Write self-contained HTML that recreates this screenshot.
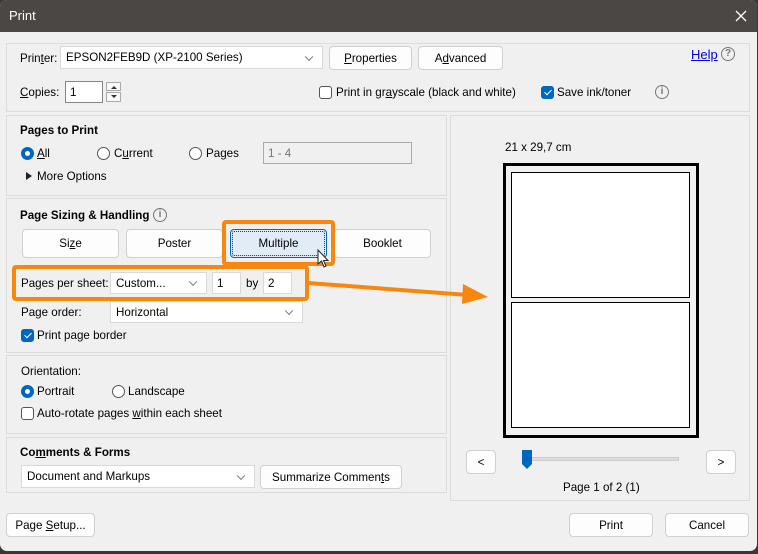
<!DOCTYPE html>
<html><head><meta charset="utf-8"><style>
*{box-sizing:border-box;margin:0;padding:0}
body{width:758px;height:554px;overflow:hidden;background:#3a3836;font-family:"Liberation Sans",sans-serif;font-size:11.6px;color:#000;position:relative}
.a{position:absolute}
.win{position:absolute;left:0;top:0;width:757px;height:551px;background:#f0f0f0;border-radius:7px;overflow:hidden}
.title{position:absolute;left:0;top:0;width:757px;height:32px;background:#4a4745;color:#fff;font-size:13px}
.grp{position:absolute;border:1px solid #dcdcdc}
.btn{position:absolute;background:#fdfdfd;border:1px solid #d0d0d0;border-radius:4px;text-align:center;display:flex;align-items:center;justify-content:center}
.inp{position:absolute;background:#fff;border:1px solid #d9d9d9;padding-left:4px;display:flex;align-items:center}
.cb{position:absolute;background:#fff;border:1px solid #d9d9d9;padding-left:5px;display:flex;align-items:center}
.cb:after{content:"";position:absolute;right:10px;top:50%;width:5px;height:5px;border-right:1px solid #777;border-bottom:1px solid #777;transform:translateY(-70%) rotate(45deg)}
.t{position:absolute;white-space:nowrap;line-height:14px}
.b{font-weight:bold}
.rad{position:absolute;width:13px;height:13px;border:1px solid #555;border-radius:50%;background:#fff}
.rad.on{background:#fff;border:4px solid #0067c0}
.chk{position:absolute;width:13px;height:13px;border:1px solid #555;border-radius:3px;background:#fff}
.chk.on{background:#0067c0;border-color:#0067c0}
.chk.on:after{content:"";position:absolute;left:3.5px;top:1px;width:3px;height:6px;border-right:1.3px solid #fff;border-bottom:1.3px solid #fff;transform:rotate(45deg)}
.info{position:absolute;width:14px;height:14px;border:1.3px solid #777;border-radius:50%;color:#777;font-size:10px;font-weight:bold;text-align:center;line-height:12px}
u{text-decoration:underline}
</style></head><body>
<div class="win">
<div class="title"><span class="t" style="left:9px;top:9px">Print</span>
<svg class="a" style="left:735px;top:10px" width="12" height="12"><path d="M1 1L11 11M11 1L1 11" stroke="#fff" stroke-width="1.3"/></svg></div>

<div class="grp" style="left:6px;top:43px;width:744px;height:69px"></div>
<span class="t" style="left:20px;top:52px">Prin<u>t</u>er:</span>
<div class="cb" style="left:60px;top:46px;width:263px;height:23px">EPSON2FEB9D (XP-2100 Series)</div>
<div class="btn" style="left:329px;top:46px;width:83px;height:24px"><span><u>P</u>roperties</span></div>
<div class="btn" style="left:418px;top:46px;width:85px;height:24px"><span>A<u>d</u>vanced</span></div>
<span class="t" style="left:691px;top:48px;color:#0000ee;font-size:13px;text-decoration:underline">Help</span>
<div class="info" style="left:721px;top:47px;font-size:10px">?</div>
<span class="t" style="left:20px;top:86px"><u>C</u>opies:</span>
<div class="inp" style="left:65px;top:81px;width:38px;height:22px;border-color:#888">1</div>
<div class="a" style="left:106px;top:82px;width:15px;height:9px;border:1px solid #aaa;background:#f8f8f8"></div>
<div class="a" style="left:106px;top:92px;width:15px;height:10px;border:1px solid #aaa;background:#f8f8f8"></div>
<svg class="a" style="left:110px;top:84px" width="8" height="16"><path d="M1 5L4 2L7 5Z M1 11L4 14L7 11Z" fill="#333"/></svg>
<div class="chk" style="left:319px;top:86px"></div>
<span class="t" style="left:336px;top:86px">Print in gr<u>a</u>yscale (black and white)</span>
<div class="chk on" style="left:541px;top:86px"></div>
<span class="t" style="left:557px;top:86px">Save ink/toner</span>
<div class="info" style="left:655px;top:85px">i</div>

<div class="grp" style="left:6px;top:115px;width:441px;height:81px"></div>
<span class="t b" style="left:20px;top:124px">Pages to Print</span>
<div class="rad on" style="left:21px;top:147px"></div><span class="t" style="left:37px;top:147px"><u>A</u>ll</span>
<div class="rad" style="left:97px;top:147px"></div><span class="t" style="left:114px;top:147px">C<u>u</u>rrent</span>
<div class="rad" style="left:189px;top:147px"></div><span class="t" style="left:206px;top:147px">Pa<u>g</u>es</span>
<div class="inp" style="left:263px;top:142px;width:149px;height:22px;background:#f0f0f0;border-color:#aaa;color:#777">1 - 4</div>
<svg class="a" style="left:26px;top:172px" width="6" height="8"><path d="M0 0L6 4L0 8Z" fill="#222"/></svg>
<span class="t" style="left:37px;top:170px">More Options</span>

<div class="grp" style="left:6px;top:198px;width:441px;height:155px"></div>
<span class="t b" style="left:20px;top:209px">Page Sizing &amp; Handling</span>
<div class="info" style="left:153px;top:208px">i</div>
<div class="btn" style="left:22px;top:229px;width:97px;height:29px"><span>Si<u>z</u>e</span></div>
<div class="btn" style="left:126px;top:229px;width:97px;height:29px">Poster</div>
<div class="btn" style="left:334px;top:229px;width:97px;height:29px">Booklet</div>
<div class="a" style="left:222px;top:220px;width:113px;height:46px;border:4px solid #f7870f;border-radius:4px"></div>
<div class="btn" style="left:230px;top:229px;width:97px;height:29px;background:#e1ecf8;border-color:#0067c0;outline:1px dotted #333;outline-offset:-3px">Multiple</div>
<svg class="a" style="left:317px;top:249px" width="14" height="22"><path d="M1 1L1 15L4.5 12L7 18L9 17L6.5 11.5L11 11.5Z" fill="#fff" stroke="#222" stroke-width="1"/></svg>
<div class="a" style="left:12px;top:265px;width:297px;height:36px;border:4px solid #f7870f;border-radius:4px"></div>
<span class="t" style="left:21px;top:277px">Pages per sheet:</span>
<div class="cb" style="left:110px;top:272px;width:97px;height:22px">Custom...</div>
<div class="inp" style="left:212px;top:272px;width:29px;height:22px">1</div>
<span class="t" style="left:246px;top:277px">by</span>
<div class="inp" style="left:263px;top:272px;width:29px;height:22px">2</div>
<span class="t" style="left:21px;top:306px">Page order:</span>
<div class="cb" style="left:110px;top:301px;width:193px;height:22px">Horizontal</div>
<div class="chk on" style="left:21px;top:329px"></div>
<span class="t" style="left:37px;top:329px">Print page border</span>

<div class="grp" style="left:6px;top:355px;width:441px;height:79px"></div>
<span class="t" style="left:21px;top:365px">Orientation:</span>
<div class="rad on" style="left:21px;top:385px"></div><span class="t" style="left:37px;top:385px">Portrait</span>
<div class="rad" style="left:112px;top:385px"></div><span class="t" style="left:128px;top:385px">Landscape</span>
<div class="chk" style="left:21px;top:407px"></div>
<span class="t" style="left:37px;top:407px">Auto-rotate pages <u>w</u>ithin each sheet</span>

<div class="grp" style="left:6px;top:437px;width:441px;height:56px"></div>
<span class="t b" style="left:20px;top:446px">Co<u>m</u>ments &amp; Forms</span>
<div class="cb" style="left:21px;top:465px;width:234px;height:23px">Document and Markups</div>
<div class="btn" style="left:260px;top:465px;width:142px;height:24px"><span>Summarize Commen<u>t</u>s</span></div>

<div class="grp" style="left:450px;top:115px;width:300px;height:386px"></div>
<span class="t" style="left:505px;top:141px">21 x 29,7 cm</span>
<div class="a" style="left:503px;top:163px;width:196px;height:275px;border:3px solid #000;background:#f0f0f0"></div>
<div class="a" style="left:511px;top:172px;width:179px;height:126px;border:1px solid #000;background:#fff"></div>
<div class="a" style="left:511px;top:302px;width:179px;height:126px;border:1px solid #000;background:#fff"></div>
<div class="btn" style="left:466px;top:450px;width:30px;height:24px">&lt;</div>
<div class="btn" style="left:706px;top:450px;width:30px;height:24px">&gt;</div>
<div class="a" style="left:522px;top:457px;width:157px;height:4px;background:#ddd;border:1px solid #ccc"></div>
<svg class="a" style="left:522px;top:450px" width="11" height="20"><path d="M0 0H10V14L5 19L0 14Z" fill="#0067c0"/></svg>
<span class="t" style="left:563px;top:481px">Page 1 of 2 (1)</span>

<div class="btn" style="left:6px;top:513px;width:89px;height:24px"><span>Page <u>S</u>etup...</span></div>
<div class="btn" style="left:569px;top:513px;width:84px;height:24px">Print</div>
<div class="btn" style="left:665px;top:513px;width:84px;height:24px">Cancel</div>

<svg class="a" style="left:0;top:0" width="758" height="554"><path d="M308 283L468 295" stroke="#f7870f" stroke-width="4"/><path d="M463 284L488 297L462 304Z" fill="#f7870f"/></svg>
</div>
</body></html>
